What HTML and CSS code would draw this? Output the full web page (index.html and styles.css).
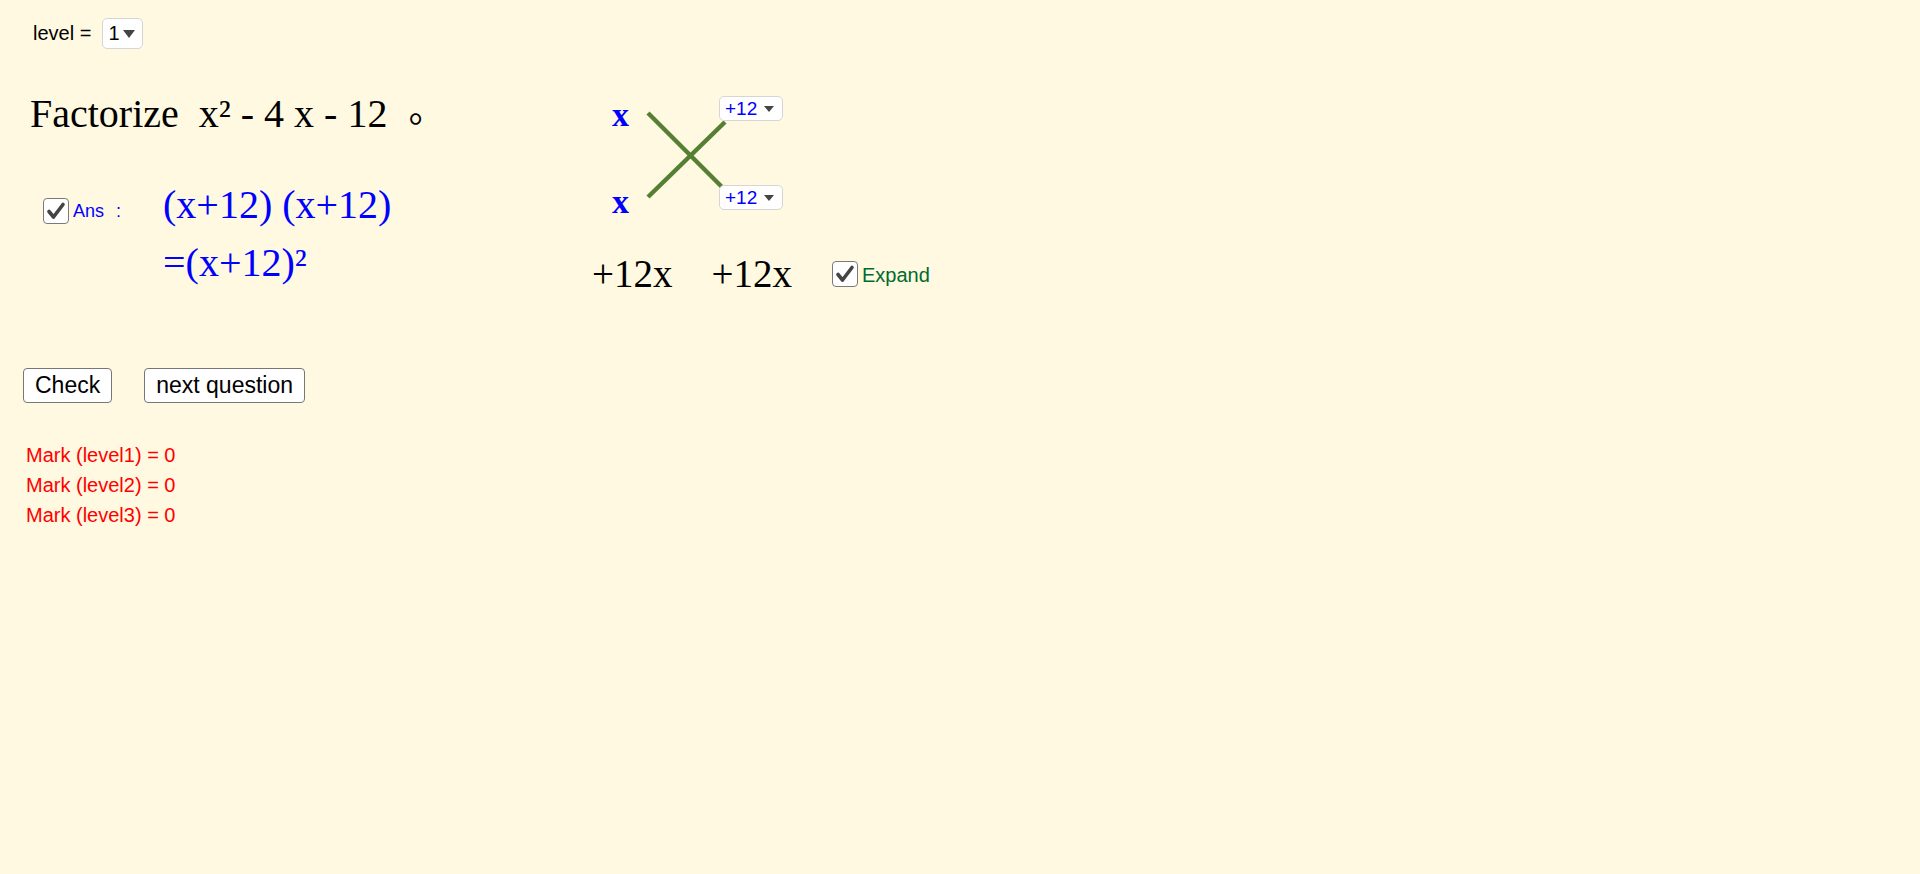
FILE: index.html
```html
<!DOCTYPE html>
<html>
<head>
<meta charset="utf-8">
<title>Factorize</title>
<link rel="stylesheet" href="styles.css">
</head>
<body>
<div class="app">
  <div class="level-row">
    <span class="level-label">level =</span>
    <div class="select level-select"><span>1</span><span class="caret"></span></div>
  </div>

  <div class="main">
    <div class="left">
      <div class="title">Factorize&nbsp; x² - 4 x - 12 <span class="stop">。</span></div>
      <div class="answer">
        <div class="ans-label">
          <span class="checkbox"><svg viewBox="0 0 26 26" width="26" height="26"><path d="M6 13.5 L10.5 19 L20 6.5" fill="none" stroke="#444" stroke-width="3.6" stroke-linecap="round" stroke-linejoin="round"/></svg></span>
          <span class="ans-text">Ans<span class="colon">:</span></span>
        </div>
        <div class="expr">
          <div>(x+12) (x+12)</div>
          <div>=(x+12)²</div>
        </div>
      </div>
    </div>

    <div class="right">
      <div class="cross">
        <svg class="cross-lines" viewBox="0 0 200 160" width="200" height="160">
          <line x1="56" y1="23" x2="130" y2="97" stroke="#557f33" stroke-width="4.5"/>
          <line x1="56" y1="107" x2="133" y2="32" stroke="#557f33" stroke-width="4.5"/>
        </svg>
        <span class="var var-top">x</span>
        <span class="var var-bottom">x</span>
        <div class="select small-select sel-top"><span>+12</span><span class="caret"></span></div>
        <div class="select small-select sel-bottom"><span>+12</span><span class="caret"></span></div>
      </div>
      <div class="terms">
        <span class="term">+12x</span>
        <span class="term term-second">+12x</span>
        <span class="checkbox expand-box"><svg viewBox="0 0 26 26" width="26" height="26"><path d="M6 13.5 L10.5 19 L20 6.5" fill="none" stroke="#444" stroke-width="3.6" stroke-linecap="round" stroke-linejoin="round"/></svg></span>
        <span class="expand-text">Expand</span>
      </div>
    </div>
  </div>

  <div class="buttons">
    <button class="btn">Check</button>
    <button class="btn">next question</button>
  </div>

  <div class="marks">
    <div>Mark (level1) = 0</div>
    <div>Mark (level2) = 0</div>
    <div>Mark (level3) = 0</div>
  </div>
</div>
</body>
</html>
```

FILE: styles.css
```css
html, body {
  margin: 0;
  padding: 0;
  background: #fff9e1;
}
body {
  font-family: "Liberation Sans", Arial, sans-serif;
  color: #000;
  width: 1920px;
  height: 874px;
  overflow: hidden;
}
.app {
  padding-top: 18px;
}
.level-row {
  display: flex;
  align-items: center;
  height: 31px;
  margin-left: 33px;
  gap: 11px;
}
.level-label {
  font-size: 20px;
}
.select {
  display: flex;
  align-items: center;
  box-sizing: border-box;
  background: #fff;
  border: 1px solid #d6d6d6;
  border-radius: 5px;
}
.caret {
  width: 0;
  height: 0;
  border-left: 5px solid transparent;
  border-right: 5px solid transparent;
  border-top: 7px solid #444;
}
.level-select {
  width: 41px;
  height: 31px;
  padding-left: 5px;
  font-size: 20px;
  gap: 3px;
}
.level-select .caret {
  border-left-width: 6px;
  border-right-width: 6px;
  border-top-width: 8px;
}
.main {
  display: flex;
  margin-top: 41px;
}
.left {
  width: 592px;
}
.title {
  margin-left: 30px;
  font-family: "Liberation Serif", "Times New Roman", serif;
  font-size: 40px;
  line-height: 48px;
  white-space: nowrap;
}
.stop {
  font-family: "Noto Sans CJK TC", sans-serif;
  font-size: 36px;
  vertical-align: -6px;
  line-height: 1;
}
.answer {
  display: grid;
  grid-template-columns: 120px auto;
  margin-left: 43px;
  margin-top: 38px;
}
.ans-label {
  display: flex;
  align-items: center;
  gap: 4px;
  padding-top: 22px;
  height: 26px;
}
.checkbox {
  display: block;
  width: 26px;
  height: 26px;
  box-sizing: border-box;
  border: 1.5px solid #7a7a7a;
  border-radius: 4px;
  background: #fff;
  position: relative;
}
.checkbox svg {
  position: absolute;
  left: -1.5px;
  top: -1.5px;
}
.ans-text {
  color: #0000ff;
  font-size: 18px;
  line-height: 26px;
}
.colon {
  margin-left: 12px;
}
.expr {
  color: #0000ff;
  font-family: "Liberation Serif", "Times New Roman", serif;
  font-size: 40px;
  line-height: 58px;
  white-space: nowrap;
}
.right {
  width: 400px;
}
.cross {
  position: relative;
  height: 160px;
}
.cross-lines {
  position: absolute;
  left: 0;
  top: 0;
}
.var {
  position: absolute;
  left: 20px;
  color: #0000ff;
  font-family: "Liberation Serif", "Times New Roman", serif;
  font-weight: bold;
  font-size: 34px;
  line-height: 34px;
}
.var-top { top: 8px; }
.var-bottom { top: 95px; }
.small-select {
  position: absolute;
  left: 127px;
  width: 64px;
  height: 25px;
  padding-left: 5px;
  gap: 7px;
  color: #0000ff;
  font-size: 19px;
}
.small-select .caret {
  border-left-width: 5px;
  border-right-width: 5px;
  border-top-width: 6px;
}
.sel-top { top: 6px; }
.sel-bottom { top: 95px; }
.terms {
  display: flex;
  align-items: center;
  height: 48px;
}
.term {
  font-family: "Liberation Serif", "Times New Roman", serif;
  font-size: 39px;
  line-height: 48px;
}
.term-second {
  margin-left: 39px;
}
.expand-box {
  margin-left: 40px;
}
.expand-text {
  margin-left: 4px;
  color: #006b2d;
  font-size: 20px;
  line-height: 26px;
  padding-top: 2px;
}
.buttons {
  display: flex;
  gap: 32px;
  margin-top: 70px;
  margin-left: 23px;
}
.btn {
  font-family: "Liberation Sans", Arial, sans-serif;
  font-size: 23px;
  height: 35px;
  padding: 0 11px;
  background: #fff;
  color: #000;
  border: 1px solid #777;
  border-radius: 4px;
}
.marks {
  margin-top: 37px;
  margin-left: 26px;
  color: #ff0000;
  font-size: 20px;
  line-height: 30px;
}
```
